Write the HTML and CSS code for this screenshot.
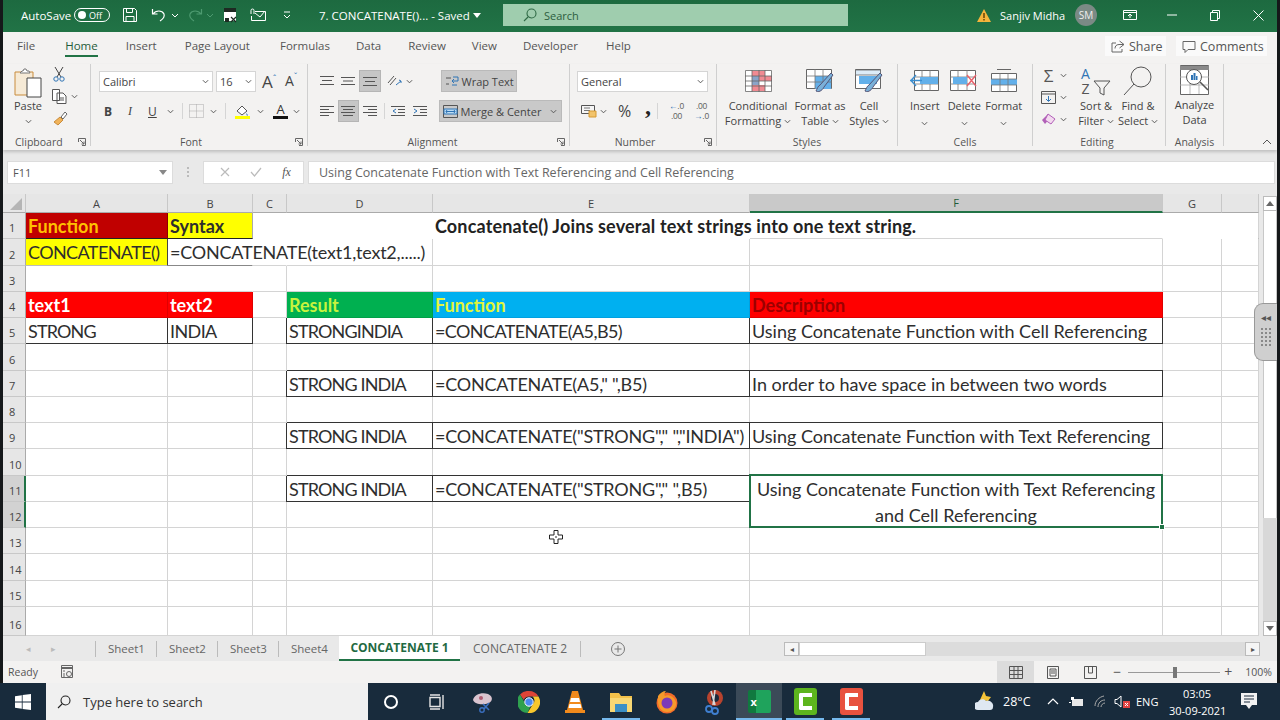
FILE: index.html
```html
<!DOCTYPE html>
<html lang="en">
<head>
<meta charset="utf-8">
<title>Excel</title>
<link rel="stylesheet" href="styles.css">
</head>
<body>
<svg class="defs" width="0" height="0"><symbol id="car" viewBox="0 0 8 5"><path d="M1 1l3 3 3-3" fill="none" stroke="#555" stroke-width="1.1"/></symbol></svg>
<div class="screen">
<div class="app">
  <header class="titlebar">
    <span class="t-auto">AutoSave</span>
    <span class="toggle"><i></i>Off</span>
    <svg class="q q-save" width="16" height="16" viewBox="0 0 16 16" fill="none" stroke="#fff"><path d="M1.5 1.5h11l2 2v11h-13zM4.5 1.5v4h6v-4M4 14.5v-5h8v5"/></svg>
    <svg class="q q-undo" width="16" height="16" viewBox="0 0 16 16" fill="none" stroke="#fff" stroke-width="1.2"><path d="M1.5 2v5h5M2 7c3-4 9-4 11 0 1 3-1 5-4 7"/></svg>
    <svg class="q q-c1" width="8" height="5"><path d="M1 1l3 3 3-3" fill="none" stroke="#fff"/></svg>
    <svg class="q q-redo" width="16" height="16" viewBox="0 0 16 16" fill="none" stroke="#4d9a70" stroke-width="1.2"><path d="M14.5 2v5h-5M14 7C11 3 5 3 3 7c-1 3 1 5 4 7"/></svg>
    <svg class="q q-c2" width="8" height="5"><path d="M1 1l3 3 3-3" fill="none" stroke="#4d9a70"/></svg>
    <svg class="q q-prev" width="14" height="16" viewBox="0 0 14 16"><path d="M0 1h12v13H0z" fill="#fff"/><path d="M0 1h12v4H0z" fill="#1e2a22"/><path d="M1 15h4v-4H1z" fill="#1e2a22"/><path d="M7 10l5 5M12 10l-5 5" stroke="#1e2a22" stroke-width="1.2"/></svg>
    <svg class="q q-mail" width="16" height="14" viewBox="0 0 16 14" fill="none" stroke="#fff"><path d="M5 3.500H15.500v9h-14V8M5 5l5 4 5-6"/><path d="M1 6V2.500a1.500 1.500 0 0 1 3 0V6"/></svg>
    <svg class="q q-more" width="8" height="8" viewBox="0 0 8 8" fill="none" stroke="#fff"><path d="M1 1h6M1 4l3 3 3-3"/></svg>
    <span class="t-doc">7. CONCATENATE()... - Saved</span>
    <svg class="q-c3" width="8" height="5"><path d="M0 0h8L4 5z" fill="#fff"/></svg>
    <div class="searchbox">
      <svg width="14" height="14" viewBox="0 0 14 14" fill="none" stroke="#2f6a45" stroke-width="1.1"><circle cx="8.500" cy="5.500" r="4.500"/><path d="M5 9l-4 4"/></svg>
      <span>Search</span>
    </div>
    <svg class="warn" width="14" height="13" viewBox="0 0 14 13"><path d="M7 0l7 13H0z" fill="#f4b43c"/><path d="M6.300 4h1.400v5H6.300zM6.300 10h1.400v1.500H6.300z" fill="#5a3b00"/></svg>
    <span class="t-user">Sanjiv Midha</span>
    <span class="avatar">SM</span>
    <svg class="w-disp" width="14" height="12" viewBox="0 0 14 12" fill="none" stroke="#fff"><path d="M.5 1.500h13v9H.5zM.5 3.500h13M7 9V5M5 7l2-2 2 2"/></svg>
    <svg class="w-min" width="10" height="2"><path d="M0 1h10" stroke="#fff"/></svg>
    <svg class="w-max" width="10" height="11" viewBox="0 0 10 11" fill="none" stroke="#fff"><path d="M.5 2.500h7v8h-7zM2.500 2.500v-2h7v8h-2"/></svg>
    <svg class="w-close" width="11" height="11"><path d="M.5.5l10 10M10.500.5l-10 10" stroke="#fff"/></svg>
  </header>

  <nav class="tabs">
    <span>File</span><span class="on">Home</span><span>Insert</span><span>Page Layout</span><span>Formulas</span><span>Data</span><span>Review</span><span>View</span><span>Developer</span><span>Help</span>
    <div class="tabs-r">
      <span class="tbtn share"><svg width="14" height="13" viewBox="0 0 14 13" fill="none" stroke="#666"><path d="M8.500 1l4.500 3.500L8.500 8M13 4.500H8c-3 0-4 2-4 4M5 3H1v9h10V9"/></svg>Share</span>
      <span class="tbtn comm"><svg width="14" height="13" viewBox="0 0 14 13" fill="none" stroke="#666"><path d="M1 1.500h12v8H6l-3 3v-3H1z"/></svg>Comments</span>
    </div>
  </nav>

  <section class="ribbon">
    <div class="grp g-clip">
      <div class="body">
        <div class="paste">
          <svg width="28" height="30" viewBox="0 0 28 30" fill="none"><path d="M1 4h18v23H1z" fill="#f6ead6" stroke="#c98c3c"/><path d="M6 5l2-2h1l1-2h2l1 2h2l1 2z" fill="#fff" stroke="#777"/><path d="M13 10h14v19H13z" fill="#fff" stroke="#444"/></svg>
          <span>Paste</span>
          <svg class="car"><use href="#car"/></svg>
        </div>
        <div class="clipcol">
          <svg width="12" height="16" viewBox="0 0 12 16" fill="none" stroke="#444"><path d="M2 1l6 10M10 1L4 11"/><circle cx="3" cy="13" r="2.200" stroke="#2f74b5"/><circle cx="9" cy="13" r="2.200" stroke="#2f74b5"/></svg>
          <span class="row"><svg width="15" height="15" viewBox="0 0 15 15" fill="none" stroke="#555"><path d="M.5.500h7v11h-7zM5 4h6l3 3v7.500H5z" fill="#fff"/><path d="M7 9h5M7 11h5"/></svg><svg class="car"><use href="#car"/></svg></span>
          <svg width="15" height="15" viewBox="0 0 15 15"><path d="M1 11l6-5 3 3-5 5z" fill="#f0b35a" stroke="#c98c3c"/><path d="M8 6l4-5 2 2-4 5z" fill="#fff" stroke="#666"/></svg>
        </div>
      </div>
      <div class="lbl">Clipboard</div><svg class="launch" width="8" height="8" viewBox="0 0 8 8" fill="none" stroke="#666"><path d="M.5 4V.5H7.500V7.500H4M2 2l4 4M6 3.500V6H3.500"/></svg>
    </div>

    <div class="grp g-font">
      <div class="body col">
        <div class="row r1">
          <span class="sel s-name">Calibri<svg class="car"><use href="#car"/></svg></span>
          <span class="sel s-size">16<svg class="car"><use href="#car"/></svg></span>
          <span class="bigA">A<sup>ˆ</sup></span><span class="smA">A<sup>ˇ</sup></span>
        </div>
        <div class="row r2">
          <b class="fb">B</b><i class="fi">I</i><u class="fu">U</u><svg class="car"><use href="#car"/></svg>
          <span class="vs"></span>
          <svg width="15" height="14" viewBox="0 0 15 14" fill="none" stroke="#aaa" stroke-dasharray="1 1"><path d="M.5.500h14v13H.5zM.5 7h14M7.500.500v13"/></svg><svg class="car"><use href="#car"/></svg>
          <span class="vs"></span>
          <svg class="fill" width="16" height="15" viewBox="0 0 16 15"><path d="M2 7l5-5 5 5-5 4z" fill="#fff" stroke="#555"/><path d="M11 9l2 2-1 1z" fill="#2f74b5"/><path d="M0 12h15v3H0z" fill="#ffff00"/></svg><svg class="car"><use href="#car"/></svg>
          <span class="colorA">A</span><svg class="car"><use href="#car"/></svg>
        </div>
      </div>
      <div class="lbl">Font</div><svg class="launch" width="8" height="8" viewBox="0 0 8 8" fill="none" stroke="#666"><path d="M.5 4V.5H7.500V7.500H4M2 2l4 4M6 3.500V6H3.500"/></svg>
    </div>

    <div class="grp g-align">
      <div class="body col">
        <div class="row r1">
          <span class="al"><svg width="14" height="10" viewBox="0 0 14 10" stroke="#555"><path d="M0 .5h14M2 4.500h10M0 8.500h14"/></svg></span>
          <span class="al"><svg width="14" height="10" viewBox="0 0 14 10" stroke="#555"><path d="M0 1.500h14M2 5h10M0 8.500h14"/></svg></span>
          <span class="al act"><svg width="14" height="10" viewBox="0 0 14 10" stroke="#555"><path d="M0 1.500h14M2 5.500h10M0 9.500h14"/></svg></span>
          <span class="orient"><svg width="16" height="14" viewBox="0 0 16 14" fill="none" stroke="#555"><path d="M1 9l6-7M3 11l6-7"/><path d="M9 11l5-4M12 6l2 1v2" stroke="#2f74b5"/></svg><svg class="car"><use href="#car"/></svg></span>
          <span class="abtn wrap"><svg width="14" height="14" viewBox="0 0 14 14" fill="none" stroke="#555"><path d="M1 4h5M1 10h3"/><path d="M8 3h5M13 3v4H7l2-2M7 7l2 2M7 11h5" stroke="#2f74b5"/></svg>Wrap Text</span>
        </div>
        <div class="row r2">
          <span class="al"><svg width="14" height="11" viewBox="0 0 14 11" stroke="#555"><path d="M0 .5h14M0 3.500h9M0 6.500h14M0 9.500h9"/></svg></span>
          <span class="al act"><svg width="14" height="11" viewBox="0 0 14 11" stroke="#555"><path d="M0 .5h14M2 3.500h10M0 6.500h14M2 9.500h10"/></svg></span>
          <span class="al"><svg width="14" height="11" viewBox="0 0 14 11" stroke="#555"><path d="M0 .5h14M5 3.500h9M0 6.500h14M5 9.500h9"/></svg></span>
          <span class="vs"></span>
          <span class="al"><svg width="14" height="11" viewBox="0 0 14 11" stroke="#555" fill="none"><path d="M0 .5h14M7 3.500h7M7 6.500h7M0 9.500h14"/><path d="M5 3L2 5l3 2" stroke="#2f74b5"/></svg></span>
          <span class="al"><svg width="14" height="11" viewBox="0 0 14 11" stroke="#555" fill="none"><path d="M0 .5h14M7 3.500h7M7 6.500h7M0 9.500h14"/><path d="M1 3l3 2-3 2" stroke="#2f74b5"/></svg></span>
          <span class="abtn merge"><svg width="15" height="13" viewBox="0 0 15 13" fill="none" stroke="#555"><path d="M.5.500h14v12H.5z"/><path d="M1 4h13v5H1z" fill="#bcdcf4" stroke="#2f74b5"/><path d="M3 6.500h9M4 5L3 6.500 4 8M11 5l1 1.500L11 8" stroke="#2f74b5"/></svg>Merge &amp; Center<svg class="car"><use href="#car"/></svg></span>
        </div>
      </div>
      <div class="lbl">Alignment</div><svg class="launch" width="8" height="8" viewBox="0 0 8 8" fill="none" stroke="#666"><path d="M.5 4V.5H7.500V7.500H4M2 2l4 4M6 3.500V6H3.500"/></svg>
    </div>

    <div class="grp g-num">
      <div class="body col">
        <div class="row r1"><span class="sel s-gen">General<svg class="car"><use href="#car"/></svg></span></div>
        <div class="row r2">
          <svg width="16" height="13" viewBox="0 0 16 13"><path d="M.5.500h13v8H.5z" fill="#f5f5f5" stroke="#555"/><path d="M3 3h6M3 5.500h6" stroke="#777"/><path d="M8 6h7v6H8z" fill="#f2c46c" stroke="#d79a33"/></svg><svg class="car"><use href="#car"/></svg>
          <span class="pct">%</span><b class="comma">,</b><span class="vs"></span>
          <span class="dec"><span class="d1"><i>←</i>.0</span><span class="d2">.00</span></span><span class="dec"><span class="d2">.00</span><span class="d1"><i>→</i>.0</span></span>
        </div>
      </div>
      <div class="lbl">Number</div><svg class="launch" width="8" height="8" viewBox="0 0 8 8" fill="none" stroke="#666"><path d="M.5 4V.5H7.500V7.500H4M2 2l4 4M6 3.500V6H3.500"/></svg>
    </div>

    <div class="grp g-styles">
      <div class="body">
        <div class="big b-cf"><svg width="27" height="22" viewBox="0 0 27 22"><path d="M0 0h27v22H0z" fill="#fff"/><path d="M7 1h13v5H7zM14 6h13v5H14zM7 15h13v6H7z" fill="#f08a92"/><path d="M7 6h7v5H7zM7 11h7v4H7z" fill="#8aa4c8"/><path d="M.5.500h26v21H.5zM0 6h27M0 11h27M0 16h27M7 0v22M14 0v22M20 0v22" fill="none" stroke="#666" stroke-width=".8"/></svg><span>Conditional<br>Formatting <svg class="car"><use href="#car"/></svg></span></div>
        <div class="big b-ft"><svg width="28" height="24" viewBox="0 0 28 24"><path d="M.5.500h25v19H.5z" fill="#fff" stroke="#666"/><path d="M9 7h16v13H9z" fill="#63b0ea"/><path d="M0 7h26M0 13h26M9 0v20M17 0v20" stroke="#777" stroke-width=".8"/><path d="M10 22c4 2 7-2 8-4l9-12-2-2-11 12c-2 1-3 4-4 6z" fill="#7ab0d8" stroke="#557"/></svg><span>Format as<br>Table <svg class="car"><use href="#car"/></svg></span></div>
        <div class="big b-cs"><svg width="28" height="24" viewBox="0 0 28 24"><path d="M.5.500h25v19H.5z" fill="#fff" stroke="#666"/><path d="M4 7h18v8H4z" fill="#63b0ea"/><path d="M.5 1h25v5H.5z" fill="#dcecf8" stroke="#666" stroke-width=".8"/><path d="M10 22c4 2 7-2 8-4l9-12-2-2-11 12c-2 1-3 4-4 6z" fill="#7ab0d8" stroke="#557"/></svg><span>Cell<br>Styles <svg class="car"><use href="#car"/></svg></span></div>
      </div>
      <div class="lbl">Styles</div>
    </div>

    <div class="grp g-cells">
      <div class="body">
        <div class="big b-c"><svg width="30" height="22" viewBox="0 0 30 22"><path d="M4.500.500h24v20h-24z" fill="#fff" stroke="#666"/><path d="M4 7h25M4 14h25M12 0v21M20 0v21" stroke="#777" stroke-width=".8"/><path d="M10 7h18v7H10z" fill="#63b0ea"/><path d="M0 10.500h12M6 5l-5 5.500L6 16" fill="none" stroke="#3d8fd0" stroke-width="1.400"/></svg><span>Insert</span><svg class="car"><use href="#car"/></svg></div>
        <div class="big b-c"><svg width="28" height="22" viewBox="0 0 28 22"><path d="M.5.500h25v20H.5z" fill="#fff" stroke="#666"/><path d="M0 7h26M0 14h26M8 0v21M17 0v21" stroke="#777" stroke-width=".8"/><path d="M3 7h14v7H3z" fill="#63b0ea"/><path d="M17 5l9 11M26 5l-9 11" stroke="#e8606a" stroke-width="1.400"/></svg><span>Delete</span><svg class="car"><use href="#car"/></svg></div>
        <div class="big b-c"><svg width="28" height="24" viewBox="0 0 28 24"><path d="M7 .5h14" stroke="#666"/><path d="M1.500 4.500h25v18h-25z" fill="#fff" stroke="#666"/><path d="M1 10h26v6H1z" fill="#63b0ea"/><path d="M1 10h26M1 16h26M10 4v19M18 4v19" stroke="#777" stroke-width=".8"/></svg><span>Format</span><svg class="car"><use href="#car"/></svg></div>
      </div>
      <div class="lbl">Cells</div>
    </div>

    <div class="grp g-edit">
      <div class="body">
        <div class="editcol">
          <span class="row"><span class="sigma">Σ</span><svg class="car"><use href="#car"/></svg></span>
          <span class="row"><svg width="15" height="13" viewBox="0 0 15 13" fill="none"><path d="M.5.500h14v12H.5z" stroke="#555"/><path d="M0 3h15" stroke="#555"/><path d="M7.500 5v5M5 8l2.500 2.500L10 8" stroke="#2f74b5"/></svg><svg class="car"><use href="#car"/></svg></span>
          <span class="row"><svg width="15" height="13" viewBox="0 0 15 13"><path d="M1 7l6-6 3 3-6 7z" fill="#b160b8"/><path d="M7 1l7 5-4 5-6-4z" fill="#f3d9ef" stroke="#b160b8"/></svg><svg class="car"><use href="#car"/></svg></span>
        </div>
        <div class="big b-sort"><span class="az"><span class="azA">A</span><span class="azZ">Z</span></span><svg width="18" height="16" viewBox="0 0 18 16" fill="none"><path d="M1 1h16l-6 7v7l-4-2V8z" stroke="#555"/></svg><span class="st">Sort &amp;<br>Filter <svg class="car"><use href="#car"/></svg></span></div>
        <div class="big b-find"><svg width="30" height="30" viewBox="0 0 30 30" fill="none" stroke="#555"><circle cx="18" cy="11" r="10"/><path d="M11 18L1 29"/></svg><span>Find &amp;<br>Select <svg class="car"><use href="#car"/></svg></span></div>
      </div>
      <div class="lbl">Editing</div>
    </div>

    <div class="grp g-an">
      <div class="body">
        <div class="big b-an"><svg width="30" height="31" viewBox="0 0 30 31" fill="none"><path d="M.5.500h28v29H.5z" fill="#fff" stroke="#666"/><path d="M0 1h29v4H0z" fill="#8a8a8a"/><path d="M0 12h29M0 20h29M10 5v24M19 5v24" stroke="#aaa" stroke-width=".8"/><circle cx="14" cy="12" r="7.500" fill="#fff" stroke="#555"/><path d="M11 10h2v5h-2zM13.500 8h2v7h-2zM16 11h1.500v4H16z" fill="#2f74b5"/><path d="M20 17l8 8" stroke="#555" stroke-width="1.600"/></svg><span>Analyze<br>Data</span></div>
      </div>
      <div class="lbl">Analysis</div>
    </div>
    <svg class="collapse" width="10" height="6" viewBox="0 0 10 6" fill="none" stroke="#555"><path d="M1 5l4-4 4 4"/></svg>
  </section>

  <section class="fbar">
    <div class="namebox">F11<svg width="8" height="5"><path d="M0 0h8L4 5z" fill="#888"/></svg></div>
    <span class="grip"></span>
    <div class="fbtns">
      <svg width="10" height="10"><path d="M1 1l8 8M9 1l-8 8" stroke="#bbb" stroke-width="1.200"/></svg>
      <svg width="12" height="10"><path d="M1 5l3.500 4L11 1" stroke="#bbb" stroke-width="1.200" fill="none"/></svg>
      <i>fx</i>
    </div>
    <div class="finput">Using Concatenate Function with Text Referencing and Cell Referencing</div>
  </section>

  <div class="sheetwrap">
    <div class="grid">
      <div class="ch corner"><svg width="12" height="12"><path d="M12 0v12H0z" fill="#b5b5b5"/></svg></div><div class="ch">A</div><div class="ch">B</div><div class="ch">C</div><div class="ch">D</div><div class="ch">E</div><div class="ch csel">F</div><div class="ch">G</div><div class="ch"></div>

      <div class="rh">1</div><div class="c f-func">Function</div><div class="c f-syn">Syntax</div><div class="c nr nb"></div><div class="c nr nb"></div><div class="c nr nb title">Concatenate() Joins several text strings into one text string.</div><div class="c nr tb"></div><div class="c nr nb"></div><div class="c nb"></div>

      <div class="rh">2</div><div class="c f-yel caps">CONCATENATE()</div><div class="c nr bb capq">=CONCATENATE(text1,text2,.....)</div><div class="c nr"></div><div class="c"></div><div class="c"></div><div class="c rk"></div><div class="c"></div><div class="c"></div>

      <div class="rh">3</div><div class="c nr"></div><div class="c nr"></div><div class="c"></div><div class="c"></div><div class="c"></div><div class="c rk"></div><div class="c"></div><div class="c"></div>

      <div class="rh">4</div><div class="c f-red">text1</div><div class="c f-red">text2</div><div class="c"></div><div class="c f-res">Result</div><div class="c f-fn">Function</div><div class="c f-desc">Description</div><div class="c"></div><div class="c"></div>

      <div class="rh">5</div><div class="c bx capt">STRONG</div><div class="c bx caps">INDIA</div><div class="c"></div><div class="c bx l capt">STRONGINDIA</div><div class="c bx caps">=CONCATENATE(A5,B5)</div><div class="c bx">Using Concatenate Function with Cell Referencing</div><div class="c"></div><div class="c"></div>

      <div class="rh">6</div><div class="c"></div><div class="c"></div><div class="c"></div><div class="c"></div><div class="c"></div><div class="c"></div><div class="c"></div><div class="c"></div>

      <div class="rh">7</div><div class="c"></div><div class="c"></div><div class="c"></div><div class="c bx tl capt">STRONG INDIA</div><div class="c bx t capq">=CONCATENATE(A5," ",B5)</div><div class="c bx t">In order to have space in between two words</div><div class="c"></div><div class="c"></div>

      <div class="rh">8</div><div class="c"></div><div class="c"></div><div class="c"></div><div class="c"></div><div class="c"></div><div class="c"></div><div class="c"></div><div class="c"></div>

      <div class="rh">9</div><div class="c"></div><div class="c"></div><div class="c"></div><div class="c bx tl capt">STRONG INDIA</div><div class="c bx t capq">=CONCATENATE("STRONG"," ","INDIA")</div><div class="c bx t">Using Concatenate Function with Text Referencing</div><div class="c"></div><div class="c"></div>

      <div class="rh">10</div><div class="c"></div><div class="c"></div><div class="c"></div><div class="c"></div><div class="c"></div><div class="c"></div><div class="c"></div><div class="c"></div>

      <div class="rh rsel">11</div><div class="c"></div><div class="c"></div><div class="c"></div><div class="c bx tl capt">STRONG INDIA</div><div class="c bx t capq">=CONCATENATE("STRONG"," ",B5)</div><div class="c active">Using Concatenate Function with Text Referencing<br>and Cell Referencing<span class="handle"></span></div><div class="c"></div><div class="c"></div>

      <div class="rh rsel">12</div><div class="c"></div><div class="c"></div><div class="c"></div><div class="c"></div><div class="c"></div><div class="c"></div><div class="c"></div>

      <div class="rh">13</div><div class="c"></div><div class="c"></div><div class="c"></div><div class="c"></div><div class="c"></div><div class="c"></div><div class="c"></div><div class="c"></div>
      <div class="rh">14</div><div class="c"></div><div class="c"></div><div class="c"></div><div class="c"></div><div class="c"></div><div class="c"></div><div class="c"></div><div class="c"></div>
      <div class="rh">15</div><div class="c"></div><div class="c"></div><div class="c"></div><div class="c"></div><div class="c"></div><div class="c"></div><div class="c"></div><div class="c"></div>
      <div class="rh">16</div><div class="c"></div><div class="c"></div><div class="c"></div><div class="c"></div><div class="c"></div><div class="c"></div><div class="c"></div><div class="c"></div>
    </div>
    <div class="vscroll">
      <span class="vbtn"><svg width="8" height="5"><path d="M0 5h8L4 0z" fill="#666"/></svg></span>
      <span class="vthumb"></span>
      <span class="vtrack"></span>
      <span class="vbtn"><svg width="8" height="5"><path d="M0 0h8L4 5z" fill="#666"/></svg></span>
    </div>
    <svg class="cursor" width="14" height="14" viewBox="0 0 14 14"><path d="M5 .5h4v4.500h4.500v4H9v4.500H5V9H.5V5H5z" fill="#fff" stroke="#222"/><path d="M6 7h2" stroke="#222"/></svg>
    <div class="sidehandle"><span class="sh-arrows">◂◂</span><span class="sh-dots"></span></div>
  </div>

  <section class="sheetbar">
    <span class="nav">◂</span><span class="nav">▸</span>
    <div class="stabs"><span>Sheet1</span><span>Sheet2</span><span>Sheet3</span><span>Sheet4</span><span class="s-on">CONCATENATE 1</span><span class="s-after">CONCATENATE 2</span></div>
    <svg class="plus" width="14" height="14" viewBox="0 0 14 14" fill="none" stroke="#777"><circle cx="7" cy="7" r="6.500"/><path d="M7 3.500v7M3.500 7h7"/></svg>
    <div class="hscroll">
      <span class="hbtn">◂</span><span class="hthumb"></span><span class="htrack"></span><span class="hbtn">▸</span>
    </div>
  </section>

  <footer class="status">
    <span class="ready">Ready</span>
    <svg class="macro" width="12" height="14" viewBox="0 0 12 14" fill="none" stroke="#666"><path d="M.5.500h11v12H.5z"/><path d="M.5 3h11" stroke-width="2"/><circle cx="8" cy="9" r="2.500"/><path d="M2 6h2M2 9h2M2 11h2"/></svg>
    <div class="views">
      <span class="view von"><svg width="14" height="13" viewBox="0 0 14 13" fill="none" stroke="#555"><path d="M.5.500h13v12H.5zM.5 4.500h13M.5 8.500h13M5 0v13M9 0v13"/></svg></span>
      <span class="view"><svg width="12" height="13" viewBox="0 0 12 13" fill="none" stroke="#555"><path d="M.5.500h11v12H.5zM3 3h6v7H3zM4 5h4M4 7h4"/></svg></span>
      <span class="view"><svg width="13" height="13" viewBox="0 0 13 13" fill="none" stroke="#555"><path d="M.5.500h12v12H.5zM4.500.500V7h4V.5"/></svg></span>
    </div>
    <span class="zm">−</span><span class="slider"><i></i></span><span class="zm">+</span><span class="zpct">100%</span>
  </footer>
</div>

<footer class="taskbar">
  <span class="start"><svg width="16" height="16" viewBox="0 0 16 16" fill="#fff"><path d="M0 2.200l6.800-1v6.400H0zM7.600 1.100L16 0v7.600H7.600zM0 8.400h6.800v6.400l-6.800-1zM7.600 8.400H16V16l-8.400-1.100z"/></svg></span>
  <div class="tsearch"><svg width="14" height="14" viewBox="0 0 14 14" fill="none" stroke="#222" stroke-width="1.100"><circle cx="8.500" cy="5.500" r="4.500"/><path d="M5 9l-4 4"/></svg>Type here to search</div>
  <span class="slot"><svg width="16" height="16"><circle cx="8" cy="8" r="6" fill="none" stroke="#fff" stroke-width="2"/></svg></span>
  <span class="slot"><svg width="16" height="16" viewBox="0 0 16 16" fill="none" stroke="#e5e5e5"><path d="M1 3.500h10v9H1zM1 1h10M1 15h10M14 1v14" stroke-width="1.400"/></svg></span>
  <span class="slot"><svg width="24" height="24" viewBox="0 0 24 24"><path d="M2 10c1-5 8-8 15-6 5 2 5 7 1 9-5 2-14 2-16-3z" fill="#d9c4cf"/><circle cx="10" cy="8" r="2" fill="#b05a70"/><path d="M12 14l6 6M18 13l-5 6" stroke="#3a6fc0" stroke-width="1.600"/><circle cx="11" cy="20" r="2.200" fill="none" stroke="#3a6fc0" stroke-width="1.400"/></svg></span>
  <span class="slot"><svg width="22" height="22" viewBox="0 0 22 22"><path d="M11 0a11 11 0 0 1 9.500 5.500H11A5.500 5.500 0 0 0 5.800 9L2 3.500A11 11 0 0 1 11 0z" fill="#de4437"/><path d="M2 3.500L6.800 12a5 5 0 0 0 6 2.500L9.500 22A11 11 0 0 1 2 3.500z" fill="#2fa14f"/><path d="M20.500 5.500A11 11 0 0 1 9.500 22L15 13a5 5 0 0 0-.5-7.500z" fill="#f8c72d"/><circle cx="11" cy="11" r="4.200" fill="#4a8bf0" stroke="#fff"/></svg></span>
  <span class="slot"><svg width="20" height="24" viewBox="0 0 20 24"><path d="M7 1h6l5 19H2z" fill="#f18a1c"/><path d="M6 8h8l1 4H5zM4.500 14h11l1 4h-13z" fill="#fff"/><path d="M0 20h20v3H0z" fill="#f18a1c"/></svg></span>
  <span class="slot run"><svg width="22" height="20" viewBox="0 0 22 20"><path d="M0 1h9l2 3h11v16H0z" fill="#f2c14a"/><path d="M0 6h22v14H0z" fill="#f7d774"/><path d="M5 12h12v8H5z" fill="#3a8fc6"/></svg></span>
  <span class="slot"><svg width="24" height="24" viewBox="0 0 24 24"><circle cx="12" cy="13" r="10.500" fill="#f26b2a"/><path d="M3 6c2-3 5-5 8-5-2 2-2 4-1 5 3-2 9 0 11 6 1 5-3 10-9 10S2 17 3 6z" fill="#f59a2b"/><circle cx="12" cy="13" r="5.500" fill="#7c3ab8"/></svg></span>
  <span class="slot"><svg width="22" height="26" viewBox="0 0 22 26"><circle cx="13" cy="9" r="8" fill="#b8432e"/><circle cx="13" cy="9" r="4" fill="#1a2b3c"/><path d="M9 2l4 14M13 1l-2 15" stroke="#d8d8d8" stroke-width="1.600"/><circle cx="7" cy="20" r="3" fill="none" stroke="#3f7fd0" stroke-width="1.800"/><circle cx="13" cy="22" r="3" fill="none" stroke="#3f7fd0" stroke-width="1.800"/></svg></span>
  <span class="slot run act"><span class="xl"><i>x</i></span></span>
  <span class="slot run"><span class="cam green"><i></i></span></span>
  <span class="slot run"><span class="cam red"><i></i></span></span>
  <div class="tray">
    <svg class="cloud" width="22" height="22" viewBox="0 0 22 22"><path d="M9 0l2 5 5 1-3 4-8-1z" fill="#f5c338"/><path d="M3 19a4 4 0 0 1 0-8c1-3 6-4 8-1 4-1 8 2 7 6 0 2-1 3-3 3z" fill="#dfe8f2"/></svg>
    <span class="temp">28°C</span>
    <svg class="tchev" width="12" height="7"><path d="M1 6l5-5 5 5" fill="none" stroke="#fff" stroke-width="1.200"/></svg>
    <svg class="tbat" width="14" height="12" viewBox="0 0 14 12"><path d="M3 3h11v7H3z" fill="#e8e8e8"/><path d="M2 1h3v3H2zM0 6h2v1H0z" fill="#fff"/></svg>
    <svg class="twifi" width="14" height="13" viewBox="0 0 14 13" fill="none" stroke="#aaa"><path d="M1 11c0-5 4-9 9-10M4 12c0-4 3-7 7-7M7 12c0-2 2-4 4-4"/></svg>
    <span class="tspk"><svg width="8" height="13" viewBox="0 0 8 13" fill="none" stroke="#fff"><path d="M7 1v11L3 8.500H1v-4h2z"/></svg><svg width="7" height="7"><path d="M0 0h7v7H0z" fill="#e04343"/><path d="M2 2l3 3M5 2L2 5" stroke="#fff"/></svg></span>
    <span class="teng">ENG</span>
    <span class="clock">03:05<br>30-09-2021</span>
    <svg class="tnote" width="16" height="17" viewBox="0 0 16 17"><path d="M0 0h16v12h-5l-3 4-3-4H0z" fill="#f2f2f2"/><path d="M3 3h10M3 6h10M3 9h6" stroke="#1a2b3c"/></svg>
  </div>
</footer>
</div>
</body>
</html>
```
FILE: styles.css
```css
*{box-sizing:border-box}
html,body{margin:0;padding:0;width:1280px;height:720px;overflow:hidden}
body{font-family:"Open Sans","Noto Sans",sans-serif;font-size:11px;color:#444;background:#111}
.defs{position:absolute}
.screen{width:1280px;height:720px;display:flex;flex-direction:column}
.app{flex:none;height:683px;border-left:3px solid #15181a;border-right:3px solid #15181a;display:flex;flex-direction:column;background:#f3f2f1}
svg{flex:none;display:block}
.car{width:7px;height:5px;display:inline-block}

.titlebar{height:32px;flex:none;background:linear-gradient(#1d6a40,#217346);color:#fff;display:flex;align-items:center;font-size:11.500px;padding-bottom:2px}
.t-auto{margin-left:18px;width:53px}
.toggle{width:36px;height:14px;border:1px solid #fff;border-radius:8px;font-size:9px;display:flex;align-items:center;padding-left:3px;gap:3px}
.toggle i{width:8px;height:8px;border-radius:50%;background:#fff}
.q-save{margin-left:12px}.q-undo{margin-left:13px}.q-c1{margin-left:4px}.q-redo{margin-left:8px}.q-c2{margin-left:3px}.q-prev{margin-left:10px}.q-mail{margin-left:12px}.q-more{margin-left:17px}
.t-doc{margin-left:28px;width:150px;white-space:nowrap;font-size:11.500px}
.q-c3{margin-left:4px}
.searchbox{margin-left:22px;width:345px;height:22px;background:#9fcdae;display:flex;align-items:center;padding-left:20px;gap:7px;color:#2d5e40;font-size:11px}
.warn{margin-left:129px}
.t-user{margin-left:9px;width:66px;white-space:nowrap;font-size:11px}
.avatar{margin-left:9px;width:22px;height:22px;border-radius:50%;background:#7b8a85;display:flex;align-items:center;justify-content:center;font-size:10px;color:#eee}
.w-disp{margin-left:26px}.w-min{margin-left:30px}.w-max{margin-left:33px}.w-close{margin-left:33px}

.tabs{height:32px;flex:none;display:flex;align-items:flex-start;gap:28px;padding:6px 0 0 14px;font-size:11.500px;color:#555}
.tabs>span{position:relative;white-space:nowrap}
.tabs>span:nth-child(2){margin-left:2px}
.tabs>span:nth-child(5){margin-left:2px}
.tabs>span:nth-child(6){margin-left:-2px}
.tabs>span:nth-child(7){margin-left:-1px}
.tabs>span:nth-child(8){margin-left:-2px}
.tabs>span:nth-child(9){margin-left:-2px}
.tabs .on{color:#1f5c3a;font-weight:500}
.tabs .on::after{content:"";position:absolute;left:0;right:0;top:17px;height:2px;background:#217346}
.tabs-r{margin:-2px 0 0 auto;display:flex;gap:10px;padding-right:10px;align-items:center}
.tbtn{height:20px;background:#fafafa;display:flex;align-items:center;gap:4px;padding:0 6px;font-size:12.500px;color:#555;white-space:nowrap}
.share{width:61px}.comm{width:91px}

.ribbon{height:86px;flex:none;display:flex;position:relative;box-shadow:0 2px 3px rgba(0,0,0,.18);z-index:2;background:#f3f2f1;padding-bottom:4px}
.grp{position:relative;border-right:1px solid #cfcfcf;display:flex;flex-direction:column;flex:none}
.body{flex:1;display:flex;min-height:0}
.body.col{flex-direction:column}
.lbl{height:16px;text-align:center;font-size:10.500px;color:#555;line-height:24px}
.launch{position:absolute;right:4px;bottom:0}
.row{display:flex;align-items:center}
.g-clip{width:88px}.g-font{width:217px}.g-align{width:262px}.g-num{width:147px}.g-styles{width:181px}.g-cells{width:135px}.g-edit{width:133px}.g-an{width:58px}
.g-clip .lbl{text-align:left;padding-left:12px}
.g-font .lbl{padding-right:16px}.g-align .lbl{padding-right:12px}.g-num .lbl{padding-right:16px}.g-edit .lbl{padding-right:4px}

.paste{width:48px;display:flex;flex-direction:column;align-items:center;padding:4px 0 0 2px;font-size:11px;color:#444}
.paste .car{margin-top:6px}
.clipcol{display:flex;flex-direction:column;align-items:flex-start;padding:2px 0 0 1px;gap:7px}
.clipcol>svg{margin-left:1px}
.clipcol .car{margin-left:4px}

.r1{height:28px;padding-top:6px}
.r2{height:30px;padding-top:8px}
.sel{background:#fff;border:1px solid #d5d5d5;height:21px;display:flex;align-items:center;justify-content:space-between;padding:0 3px;font-size:11px;color:#444}
.g-font .r1{padding-left:8px;gap:3px}
.s-name{width:114px}.s-size{width:40px}
.bigA{font-size:17px;margin-left:3px;width:20px;line-height:1;color:#444}
.smA{font-size:14px;line-height:1;color:#444}
sup{font-size:9px;line-height:0;color:#2f74b5;vertical-align:6px}
.g-font .r2{padding-left:13px}
.g-font .r2 .car{margin-left:6px}
.fb,.fi,.fu{font-size:12px;color:#444;width:23px;font-family:"Liberation Serif",serif;display:block}
.fb{font-family:"Open Sans",sans-serif}
.fi{width:21px;padding-left:1px}
.fu{width:13px;font-family:"Open Sans",sans-serif}
.vs{width:1px;height:16px;background:#d5d5d5;margin:0 5px}
.g-font .r2 .vs{margin:0 6px 0 8px}
.fill{margin-left:3px}
.colorA{font-size:13px;color:#333;border-bottom:3px solid #111;line-height:13px;width:15px;text-align:center;margin-left:9px}
.g-font .r2 .colorA+.car{margin-left:5px}

.g-align .r1{padding-left:8px}
.g-align .r2{padding-left:8px}
.al{width:21.500px;height:22px;display:flex;align-items:center;justify-content:center;flex:none}
.al.act{background:#c6c6c6;border:1px solid #b5b5b5}
.orient{display:flex;align-items:center;gap:3px;margin-left:6px;width:50px}
.abtn{height:22px;background:#c9c9c9;border:1px solid #bababa;display:flex;align-items:center;gap:3px;padding-left:3px;font-size:11px;color:#444;white-space:nowrap}
.wrap{width:76px;margin-left:4px}
.merge{width:123px;margin-left:8px}
.merge .car{margin-left:6px}
.g-align .r2 .vs{margin:0 3px}

.g-num .r1{padding-left:7px}
.s-gen{width:131px}
.g-num .r2{padding-left:11px}
.g-num .r2 .car{margin-left:3px}
.pct{font-size:16px;margin-left:11px;color:#444;width:24px}
.comma{font-size:24px;color:#222;line-height:14px;margin-left:3px;width:10px;font-family:"Liberation Serif",serif;height:24px}
.g-num .vs{margin:0 6px 0 2px}
.dec{font-family:"Liberation Sans",sans-serif;font-size:8.500px;line-height:10px;width:25px;color:#666;letter-spacing:-.2px;display:flex;flex-direction:column;align-items:center}
.d1 i{font-style:normal;color:#2f74b5}

.big{display:flex;flex-direction:column;align-items:center;font-size:11px;line-height:15px;color:#444;text-align:center;white-space:nowrap;padding-top:5px;position:relative}
.big>svg{height:30px;margin-bottom:2px}
.big>svg.car{height:5px;margin:8px 0 0}
.big>span .car{display:inline-block;margin-bottom:1px}
.b-cf{width:62px;margin-left:10px}.b-ft{width:62px}.b-cs{width:50px;margin-left:-7px}
.g-styles .big{padding-top:2px}
.g-cells .body{padding-left:7px}
.b-c{width:39.500px}
.g-cells .big{padding-top:2px}
.editcol{display:flex;flex-direction:column;gap:5px;padding:3px 0 0 8px;width:44px}
.editcol .row{gap:4px;height:17px}
.sigma{font-size:17px;line-height:17px;width:15px;color:#555;text-align:center}
.b-sort{width:40px;padding-top:2px;margin-left:-1px}.b-find{width:40px;padding-top:2px;margin-left:2px}
.b-sort>svg{height:16px;margin:14px 0 2px 12px}
.az{position:absolute;left:5px;top:2px;display:flex;flex-direction:column;line-height:15px;font-size:14px}
.azA{color:#2f74b5}
.azZ{color:#555}
.b-an{width:58px;padding-top:1px}
.b-an>svg{height:31px;margin-bottom:1px}
.collapse{margin:auto 0 1px 38px}

.fbar{height:44px;flex:none;background:#e9e9e9;display:flex;align-items:center;padding:0 0 0 4px}
.namebox{width:166px;height:23px;background:#fff;border:1px solid #dcdcdc;display:flex;align-items:center;justify-content:space-between;padding:0 5px;font-size:11px;color:#555}
.grip{width:2px;height:10px;margin:0 14px;border-left:2px dotted #bbb}
.fbtns{width:101px;height:23px;background:#fff;border:1px solid #dcdcdc;display:flex;align-items:center;justify-content:space-around;padding:0 2px 0 6px;font-family:"Liberation Serif",serif;font-size:12px;color:#555}
.finput{margin-left:4px;width:967px;height:23px;background:#fff;border:1px solid #dcdcdc;display:flex;align-items:center;padding-left:10px;font-size:12.500px;color:#666;white-space:nowrap}

.sheetwrap{flex:1;display:flex;background:#e9e9e9;position:relative;min-height:0;overflow:hidden}
.grid{width:1256px;flex:none;display:grid;grid-template-columns:23px 142px 85px 34px 146px 317px 413px 59px 37px;grid-template-rows:19px repeat(15,26.25px) 29px;background:#fff;font-family:Lato,"Open Sans",sans-serif;font-size:18px;color:#2e2e2e;border-bottom:1px solid #bbb;border-right:1px solid #aaa}
.ch{background:#e6e6e6;border-right:1px solid #c8c8c8;border-bottom:1px solid #aaa;font:11px "Open Sans",sans-serif;color:#444;display:flex;align-items:center;justify-content:center}
.corner{justify-content:flex-end;align-items:flex-end;padding:0 3px 2px 0}
.csel{background:#c9c9c9;border-bottom:2px solid #217346;color:#1f5c3a}
.rh{background:#e6e6e6;border-right:1px solid #aaa;border-bottom:1px solid #c8c8c8;font:11px "Open Sans",sans-serif;color:#444;display:flex;align-items:flex-end;justify-content:flex-start;padding:0 0 3px 6px;line-height:15px}
.rsel{background:#d2d2d2;border-right:2px solid #217346}
.c{border-right:1px solid #d4d4d4;border-bottom:1px solid #d4d4d4;padding:0 0 0 2px;white-space:nowrap;line-height:26px;position:relative;min-width:0}
.caps{letter-spacing:-.6px}
.capq{letter-spacing:-.22px}
.capt{letter-spacing:-.85px}
.nr{border-right-color:transparent}
.nb{border-bottom-color:transparent}
.tb{border-bottom-color:#d4d4d4}
.rk{border-right-color:#d4d4d4}
.bb{border-bottom-color:#888}
.f-func{background:#c00000;color:#ffc000;font-weight:700;border-color:#8a0000;border-bottom-color:#222}
.f-syn{background:#ffff00;font-weight:700;border-bottom-color:#222;border-right-color:#aaa}
.f-yel{background:#ffff00;border-right-color:#444;border-bottom-color:#bbb}
.f-red{background:#ff0000;color:#fff;font-weight:700;border-color:#e00000}
.f-res{background:#00b050;color:#c8f33e;font-weight:700;border-color:#00a048}
.f-fn{background:#00b0f0;color:#e2f53a;font-weight:700;border-color:#00a0e0}
.f-desc{background:#ff0000;color:#9c0000;font-weight:700;border-color:#e00000}
.title{font-weight:700;color:#222;z-index:1;letter-spacing:.15px}
.bx{border-right-color:#333;border-bottom-color:#333}
.t{box-shadow:0 -1px 0 #333}
.l{box-shadow:-1px 0 0 #333}
.tl{box-shadow:0 -1px 0 #333,-1px 0 0 #333}
.active{grid-row:span 2;border:2px solid #217346;margin:-2px 0 0 -1px;text-align:center;line-height:26.250px;display:block;z-index:1;padding:0}
.handle{position:absolute;right:-4px;bottom:-4px;width:6px;height:6px;background:#217346;border:1px solid #fff}

.vscroll{flex:1;display:flex;flex-direction:column;padding:2px 0 0 4px}
.vbtn{height:15px;background:#fff;border:1px solid #bbb;display:flex;align-items:center;justify-content:center;flex:none}
.vthumb{height:307px;flex:none;background:#fff;border-left:1px solid #c8c8c8;border-right:1px solid #c8c8c8}
.vtrack{flex:1;background:#d8d8d8}
.cursor{position:absolute;left:546px;top:336px}
.sidehandle{position:absolute;right:0;top:109px;width:23px;height:58px;background:#cfcfcf;border:1px solid #999;border-right:none;border-radius:9px 0 0 9px;display:flex;flex-direction:column;align-items:center;padding-top:7px;gap:4px;color:#555;font-size:10px;line-height:12px}
.sh-dots{width:13px;height:20px;background-image:radial-gradient(#888 1.100px,transparent 1.300px);background-size:4px 4px}

.sheetbar{height:25px;flex:none;display:flex;align-items:center;background:#e9e9e9;position:relative;font-size:11.500px;color:#666}
.nav{width:25px;color:#bbb;font-size:9px;text-align:center}
.nav:first-child{margin-left:13px}
.stabs{display:flex;height:25px;align-items:center;margin-left:28px;border-left:1px solid transparent}
.stabs>span{padding:0 12px;border-left:1px solid #bbb;height:16px;line-height:16px;white-space:nowrap;width:61px}
.stabs .s-on{background:#fff;height:25px;line-height:23px;color:#1f6a42;font-weight:700;font-size:12px;border:none;border-bottom:2px solid #217346;width:121px;padding:0;text-align:center}
.stabs .s-after{padding:0 13px;border-left:none;border-right:1px solid #bbb;width:auto;font-size:12px}
.plus{margin-left:30px}
.hscroll{display:flex;align-items:center;margin-left:auto;height:14px;width:476px;margin-right:17px}
.hbtn{width:15px;height:14px;background:#f5f5f5;border:1px solid #bbb;font-size:8px;line-height:12px;text-align:center;flex:none;color:#555}
.hthumb{width:127px;height:14px;background:#fff;border:1px solid #ccc;flex:none}
.htrack{flex:1;height:14px;background:#dcdcdc}

.status{flex:none;height:22px;display:flex;align-items:center;background:#f3f2f1;font-size:10.500px;color:#555}
.ready{margin-left:5px;width:53px}
.views{margin-left:auto;display:flex;height:100%}
.view{width:37.500px;display:flex;align-items:center;justify-content:center}
.von{background:#dcdcdc}
.zm{width:12px;text-align:center;font-size:14px;margin-left:2px;line-height:1}
.slider{width:92px;height:1px;background:#999;position:relative;margin-left:5px}
.slider i{position:absolute;left:45px;top:-5px;width:4px;height:11px;background:#777}
.zpct{margin:0 5px 0 11px;white-space:nowrap}

.taskbar{height:37px;flex:none;background:#182b3c;display:flex;align-items:center;color:#fff;position:relative}
.start{width:46px;display:flex;justify-content:center}
.tsearch{width:322px;height:37px;background:#f0f0f0;display:flex;align-items:center;padding-left:11px;gap:12px;font-size:13px;color:#333}
.slot{width:46px;height:37px;display:flex;align-items:center;justify-content:center;flex:none;position:relative}
.run::after{content:"";position:absolute;left:4px;right:4px;bottom:0;height:2px;background:#76b9ed}
.act{background:#3b4a58}
.act::after{left:0;right:0}
.xl{width:23px;height:23px;background:linear-gradient(90deg,#10793f 0 35%,#1fa35c 35%);border-radius:2px;display:flex;align-items:center;padding-left:3px;font-size:11px}
.xl i{font-style:normal;font-weight:700}
.cam{width:23px;height:27px;border-radius:3px;display:flex;align-items:center;justify-content:center}
.green{background:#5db51e}.red{background:#e8523f}
.cam i{width:13px;height:17px;border:4px solid #fff;border-right:none;border-radius:2px 0 0 2px}
.tray{margin-left:auto;display:flex;align-items:center;height:100%;padding-right:23px;font-size:12.500px}
.temp{margin-left:6px;width:28px;white-space:nowrap}
.tchev{margin-left:16px}.tbat{margin-left:10px}.twifi{margin-left:11px}
.tspk{margin-left:6px;display:flex;align-items:flex-end;gap:1px}
.teng{margin-left:6px;font-size:11px;width:24px}
.clock{margin-left:9px;width:56px;text-align:center;font-size:11px;line-height:17px;white-space:nowrap}
.tnote{margin-left:16px}
```
